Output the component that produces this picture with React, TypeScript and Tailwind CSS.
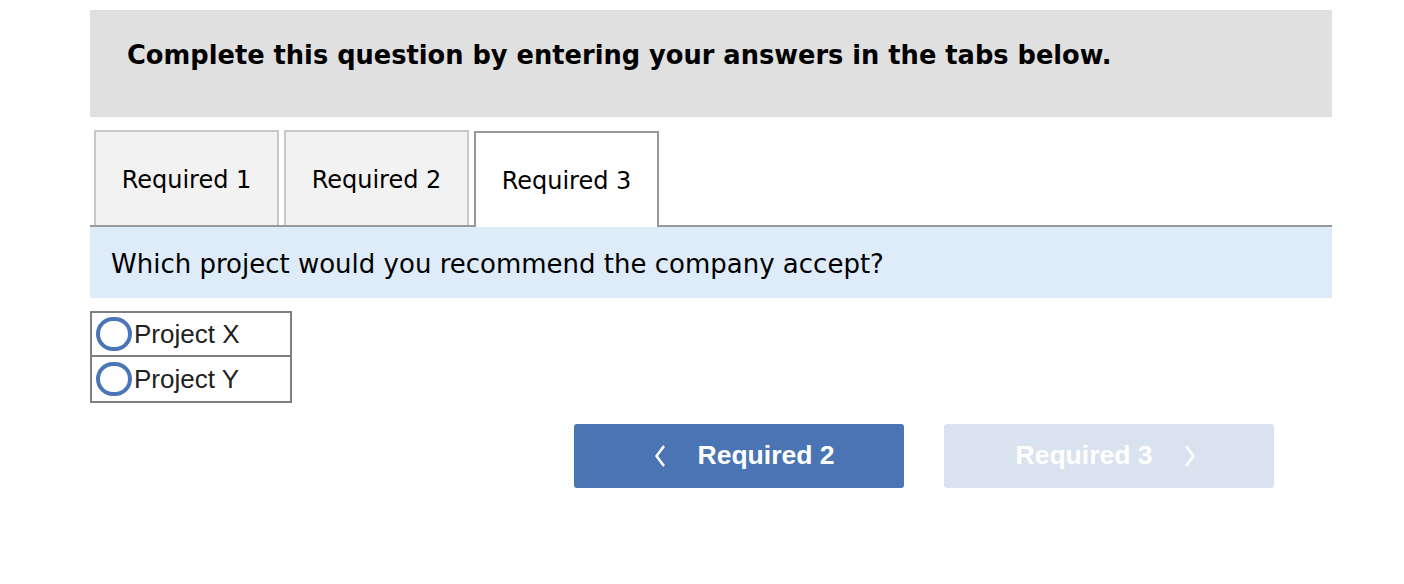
import React from "react";

export default function App() {
  return (
    <div className="w-[1404px] h-[584px] bg-white relative" style={{ fontFamily: '"DejaVu Sans", Verdana, sans-serif' }}>
      <div className="pt-[10px] pl-[90px] w-[1332px]">
        <div className="h-[107px] bg-[#e0e0e0] pl-[37px] pt-[29px]">
          <h1 className="text-[25.7px] font-bold text-black leading-[32px] whitespace-nowrap">
            Complete this question by entering your answers in the tabs below.
          </h1>
        </div>
        <div className="mt-[14px] flex items-end border-b-2 border-[#999999] pl-[4px] gap-[5px] h-[96px]">
          {["Required 1", "Required 2"].map((t) => (
            <div key={t} className="w-[185px] h-[95px] bg-[#f2f2f2] border-2 border-b-0 border-[#c8c8c8] flex items-center justify-center text-[24px] text-black pt-[3px]">
              {t}
            </div>
          ))}
          <div className="w-[185px] h-[96px] -mb-[2px] bg-white border-2 border-b-0 border-[#999999] flex items-center justify-center text-[24px] text-black pt-[2px]">
            Required 3
          </div>
        </div>
        <div className="h-[71px] bg-[#deebf8] flex items-center pl-[21px] pt-[4px] text-[26px] text-black whitespace-nowrap">
          Which project would you recommend the company accept?
        </div>
        <div className="mt-[13px] w-[202px] border-2 border-[#7f7f7f]" style={{ fontFamily: '"Liberation Sans", Arial, sans-serif' }}>
          {["Project X", "Project Y"].map((p, i) => (
            <div key={p} className={`h-[44px] flex items-center pl-[4px] ${i === 0 ? "border-b-2 border-[#7f7f7f]" : ""}`}>
              <span className="w-[36px] h-[34px] rounded-full border-[4px] border-[#4a76b8] box-border shrink-0"></span>
              <span className="text-[26px] text-[#222] leading-none ml-[2px]">{p}</span>
            </div>
          ))}
        </div>
        <div className="mt-[21px] flex pl-[484px] gap-[40px]" style={{ fontFamily: '"Liberation Sans", Arial, sans-serif' }}>
          <button className="w-[330px] h-[64px] rounded-[3px] bg-[#4a74b4] text-white font-bold text-[26.5px] flex items-center justify-center pl-[10px]">
            <svg width="12" height="24" viewBox="0 0 12 24" className="mr-[32px]"><path d="M10 2 L2.5 12 L10 22" stroke="white" strokeWidth="2.5" fill="none" /></svg>
            <span>Required 2</span>
          </button>
          <button className="w-[330px] h-[64px] rounded-[3px] bg-[#d9e3ef] text-white font-bold text-[26.5px] flex items-center justify-center pr-[6px]">
            <span>Required 3</span>
            <svg width="12" height="24" viewBox="0 0 12 24" className="ml-[32px]"><path d="M2 2 L9.5 12 L2 22" stroke="white" strokeWidth="2.5" fill="none" /></svg>
          </button>
        </div>
      </div>
    </div>
  );
}
